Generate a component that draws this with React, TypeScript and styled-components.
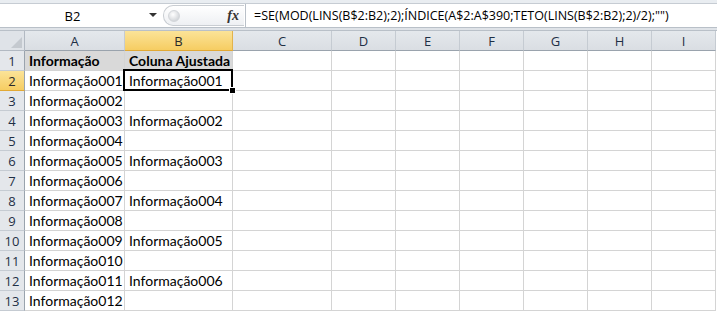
import React from 'react';
import styled, { createGlobalStyle } from 'styled-components';

const GlobalStyle = createGlobalStyle`
    html, body {
        margin: 0;
        padding: 0;
        background: #ffffff;
        overflow: hidden;
    }
`;

const COLS = [
    { name: 'A', width: 100 },
    { name: 'B', width: 108 },
    { name: 'C', width: 99 },
    { name: 'D', width: 64 },
    { name: 'E', width: 64 },
    { name: 'F', width: 64 },
    { name: 'G', width: 64 },
    { name: 'H', width: 64 },
    { name: 'I', width: 64 },
];

const ROWS: { a: string; b: string; header?: boolean }[] = [
    { a: 'Informação', b: 'Coluna Ajustada', header: true },
    { a: 'Informação001', b: 'Informação001' },
    { a: 'Informação002', b: '' },
    { a: 'Informação003', b: 'Informação002' },
    { a: 'Informação004', b: '' },
    { a: 'Informação005', b: 'Informação003' },
    { a: 'Informação006', b: '' },
    { a: 'Informação007', b: 'Informação004' },
    { a: 'Informação008', b: '' },
    { a: 'Informação009', b: 'Informação005' },
    { a: 'Informação010', b: '' },
    { a: 'Informação011', b: 'Informação006' },
    { a: 'Informação012', b: '' },
];

const Window = styled.div`
    width: 717px;
    height: 311px;
    background: #dfe3e8;
    font-family: Lato, 'Open Sans', sans-serif;
    overflow: hidden;
`;

const TopStrip = styled.div`
    height: 3px;
    background: #e9edf1;
    border-bottom: 1px solid #c6ccd3;
`;

const FormulaBar = styled.div`
    display: flex;
    height: 23px;
    background: #ffffff;
    border-bottom: 1px solid #b9c0c8;
`;

const NameBox = styled.div`
    width: 145px;
    display: flex;
    align-items: center;
    justify-content: center;
    font-family: 'Open Sans', sans-serif;
    font-size: 13px;
    color: #000;
`;

const DropArrow = styled.div`
    width: 16px;
    display: flex;
    align-items: center;
    justify-content: center;
`;

const FxBox = styled.div`
    width: 84px;
    display: flex;
    align-items: center;
    padding: 0 0 0 2px;
    box-sizing: border-box;
`;

const Pill = styled.div`
    flex: 1;
    height: 19px;
    margin-right: 1px;
    border-radius: 10px 0 0 10px;
    border: 1px solid #c9cdd2;
    border-right: none;
    background: linear-gradient(#ffffff, #eef0f3);
    display: flex;
    align-items: center;
    justify-content: space-between;
    padding: 0 5px 0 4px;
`;

const Knob = styled.div`
    width: 10px;
    height: 10px;
    border-radius: 50%;
    background: radial-gradient(circle at 40% 35%, #ffffff, #c4c8cd);
    border: 1px solid #d3d6da;
`;

const Fx = styled.span`
    font-family: 'Liberation Serif', serif;
    font-style: italic;
    font-weight: bold;
    font-size: 14px;
    color: #333;
`;

const FormulaText = styled.div`
    flex: 1;
    border-left: 1px solid #b9c0c8;
    display: flex;
    align-items: center;
    padding-left: 8px;
    font-family: 'Open Sans', sans-serif;
    font-size: 12.5px;
    color: #000;
    white-space: nowrap;
`;

const Gap = styled.div`
    height: 2px;
    background: #dfe3e8;
    border-bottom: 1px solid #b9c0c8;
`;

const Sheet = styled.div`
    display: grid;
    grid-template-columns: 25px ${COLS.map((c) => `${c.width}px`).join(' ')};
    grid-auto-rows: 20px;
    background: #ffffff;
`;

const Corner = styled.div`
    position: relative;
    background: #dfe3e8;
    border-right: 1px solid #b2b9c2;
    border-bottom: 1px solid #b2b9c2;
    box-sizing: border-box;
    &::after {
        content: '';
        position: absolute;
        right: 2px;
        bottom: 2px;
        border-style: solid;
        border-width: 0 0 11px 11px;
        border-color: transparent transparent #c4c9cf transparent;
    }
`;

const ColHead = styled.div<{ active?: boolean }>`
    display: flex;
    align-items: center;
    justify-content: center;
    box-sizing: border-box;
    font-family: 'Open Sans', sans-serif;
    font-size: 13px;
    color: #1e2f45;
    border-right: 1px solid #c5cbd2;
    border-bottom: 1px solid #9aa3ad;
    background: linear-gradient(#e4e8ec, #dadee3);
    ${({ active }) =>
        active &&
        `
        background: linear-gradient(#fbe398, #f6cd62);
        border-right-color: #e2b34c;
        border-bottom-color: #e2a935;
        color: #2a2a2a;
    `};
`;

const RowHead = styled.div<{ active?: boolean }>`
    display: flex;
    align-items: center;
    justify-content: center;
    box-sizing: border-box;
    font-family: 'Open Sans', sans-serif;
    font-size: 13px;
    color: #1e2f45;
    background: #e4e7eb;
    border-right: 1px solid #9aa3ad;
    border-bottom: 1px solid #c5cbd2;
    ${({ active }) =>
        active &&
        `
        background: linear-gradient(#fbe398, #f6cd62);
        border-bottom-color: #e2a935;
        color: #2a2a2a;
    `};
`;

const Cell = styled.div<{ filled?: boolean; bold?: boolean }>`
    display: flex;
    align-items: flex-end;
    padding: 0 0 0 4px;
    box-sizing: border-box;
    font-family: Lato, 'Open Sans', sans-serif;
    font-size: 14px;
    line-height: 18px;
    color: #000;
    white-space: nowrap;
    overflow: visible;
    border-right: 1px solid #d4d4d4;
    border-bottom: 1px solid #d4d4d4;
    background: ${({ filled }) => (filled ? '#d9d9d9' : '#ffffff')};
    font-weight: ${({ bold }) => (bold ? 700 : 400)};
`;

const SelectedCell = styled(Cell)`
    position: relative;
    &::before {
        content: '';
        position: absolute;
        left: -2px;
        top: -2px;
        right: -1px;
        bottom: -1px;
        border: 2px solid #000;
        pointer-events: none;
    }
    &::after {
        content: '';
        position: absolute;
        right: -4px;
        bottom: -4px;
        width: 5px;
        height: 5px;
        background: #000;
        border: 1px solid #fff;
    }
`;

export default function App() {
    return (
        <Window>
            <GlobalStyle />
            <TopStrip />
            <FormulaBar>
                <NameBox>B2</NameBox>
                <DropArrow>
                    <svg width="8" height="5" viewBox="0 0 8 5">
                        <path d="M0 0 L8 0 L4 4 Z" fill="#333" />
                    </svg>
                </DropArrow>
                <FxBox>
                    <Pill>
                        <Knob />
                        <Fx>fx</Fx>
                    </Pill>
                </FxBox>
                <FormulaText>=SE(MOD(LINS(B$2:B2);2);ÍNDICE(A$2:A$390;TETO(LINS(B$2:B2);2)/2);"")</FormulaText>
            </FormulaBar>
            <Gap />
            <Sheet>
                <Corner />
                {COLS.map((c) => (
                    <ColHead key={c.name} active={c.name === 'B'}>
                        {c.name}
                    </ColHead>
                ))}
                {ROWS.map((r, i) => {
                    const n = i + 1;
                    return (
                        <React.Fragment key={n}>
                            <RowHead active={n === 2}>{n}</RowHead>
                            <Cell filled={r.header} bold={r.header}>
                                {r.a}
                            </Cell>
                            {n === 2 ? (
                                <SelectedCell>{r.b}</SelectedCell>
                            ) : (
                                <Cell filled={r.header} bold={r.header}>
                                    {r.b}
                                </Cell>
                            )}
                            {COLS.slice(2).map((c) => (
                                <Cell key={c.name} />
                            ))}
                        </React.Fragment>
                    );
                })}
            </Sheet>
        </Window>
    );
}
